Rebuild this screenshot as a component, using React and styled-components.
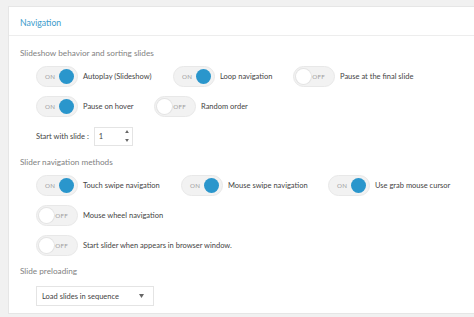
import React from "react";
import styled, { createGlobalStyle } from "styled-components";

const Global = createGlobalStyle`
  html, body { margin: 0; padding: 0; background: #f1f1f1; }
  body { font-family: "Lato", "Liberation Sans", sans-serif; color: #555; }
  * { box-sizing: border-box; }
`;

const Page = styled.div`
  padding: 6px 0 4px 8px;
  width: 474px;
  height: 317px;
  overflow: hidden;
`;

const Card = styled.div`
  background: #fff;
  border: 1px solid #e6e6e6;
  border-right: none;
  height: 308px;
`;

const Header = styled.div`
  height: 29px;
  padding-top: 2px;
  display: flex;
  align-items: center;
  padding-left: 11px;
  border-bottom: 1px solid #ededed;
  color: #3b9bcc;
  font-size: 8.7px;
`;

const Body = styled.div`
  padding: 10px 0 0 11px;
  display: flex;
  flex-direction: column;
`;

const SectionTitle = styled.div`
  font-size: 8.2px;
  color: #828282;
  height: 14px;
  line-height: 14px;
  margin-top: ${p => p.$mt || 0}px;
`;

const Row = styled.div`
  display: flex;
  align-items: center;
  padding-left: 16px;
  height: 20px;
  margin-top: ${p => (p.$mt ?? 10)}px;
`;

const Item = styled.div`
  display: flex;
  align-items: center;
  width: ${p => (p.$w ? p.$w + "px" : "auto")};
  font-size: 7.5px;
  color: #444;
`;

const Switch = styled.div`
  width: 42px;
  height: 21px;
  border-radius: 11px;
  background: #f2f2f2;
  border: 1px solid #e8e8e8;
  display: flex;
  align-items: center;
  flex-direction: ${p => (p.$on ? "row" : "row-reverse")};
  justify-content: space-between;
  padding-left: ${p => (p.$on ? 8 : 2)}px;
  padding-right: ${p => (p.$on ? 3 : 9)}px;
  margin-right: 5px;
  flex-shrink: 0;
`;

const SwitchText = styled.span`
  font-size: 6.2px;
  color: #a0a0a0;
  letter-spacing: 0.3px;
`;

const Knob = styled.span`
  width: 15px;
  height: 15px;
  border-radius: 50%;
  background: ${p => (p.$on ? "#2a96cc" : "#fff")};
  box-shadow: ${p => (p.$on ? "none" : "0 0 0 1px #e4e4e4")};
`;

const Toggle = ({ on }) => (
  <Switch $on={on}>
    <SwitchText>{on ? "ON" : "OFF"}</SwitchText>
    <Knob $on={on} />
  </Switch>
);

const StartLabel = styled.span`
  font-size: 7.5px;
  color: #444;
  margin-right: 5px;
`;

const NumberBox = styled.div`
  width: 39px;
  height: 19px;
  border: 1px solid #e4e4e4;
  display: flex;
  align-items: center;
  justify-content: space-between;
  padding-left: 4px;
  font-size: 7.5px;
  color: #444;
`;

const Spinner = styled.div`
  display: flex;
  flex-direction: column;
  width: 10px;
  height: 100%;
  align-items: center;
  justify-content: space-around;
`;

const Select = styled.div`
  width: 118px;
  height: 20px;
  border: 1px solid #e4e4e4;
  display: flex;
  align-items: center;
  justify-content: space-between;
  padding: 0 9px 0 5px;
  font-size: 7.5px;
  color: #444;
`;

const Tri = ({ up, w = 5, h = 4 }) => (
  <svg width={w} height={h} viewBox="0 0 5 4">
    <path d={up ? "M0 4 L2.5 0 L5 4 Z" : "M0 0 L5 0 L2.5 4 Z"} fill="#666" />
  </svg>
);

export default function App() {
  return (
    <>
      <Global />
      <Page>
        <Card>
          <Header>Navigation</Header>
          <Body>
            <SectionTitle>Slideshow behavior and sorting slides</SectionTitle>
            <Row $mt={6}>
              <Item $w={137}><Toggle on />Autoplay (Slideshow)</Item>
              <Item $w={120}><Toggle on />Loop navigation</Item>
              <Item><Toggle on={false} />Pause at the final slide</Item>
            </Row>
            <Row>
              <Item $w={118}><Toggle on />Pause on hover</Item>
              <Item><Toggle on={false} />Random order</Item>
            </Row>
            <Row>
              <StartLabel>Start with slide :</StartLabel>
              <NumberBox>
                1
                <Spinner><Tri up w={4} h={3} /><Tri w={4} h={3} /></Spinner>
              </NumberBox>
            </Row>
            <SectionTitle $mt={9}>Slider navigation methods</SectionTitle>
            <Row $mt={6}>
              <Item $w={145}><Toggle on />Touch swipe navigation</Item>
              <Item $w={147}><Toggle on />Mouse swipe navigation</Item>
              <Item><Toggle on />Use grab mouse cursor</Item>
            </Row>
            <Row>
              <Item><Toggle on={false} />Mouse wheel navigation</Item>
            </Row>
            <Row>
              <Item><Toggle on={false} />Start slider when appears in browser window.</Item>
            </Row>
            <SectionTitle $mt={9}>Slide preloading</SectionTitle>
            <Row $mt={8}>
              <Select>Load slides in sequence<Tri /></Select>
            </Row>
          </Body>
        </Card>
      </Page>
    </>
  );
}
